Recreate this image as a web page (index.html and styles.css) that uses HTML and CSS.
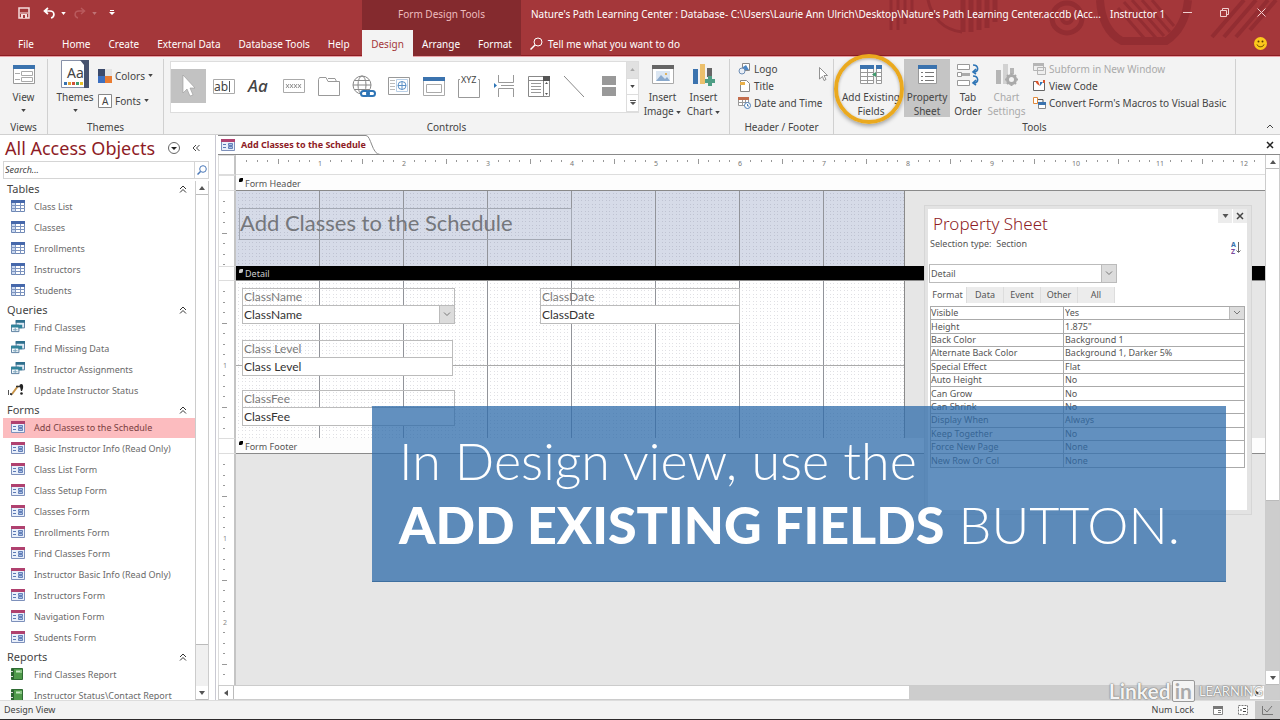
FILE: index.html
```html
<!DOCTYPE html>
<html lang="en">
<head>
    <meta charset="UTF-8">
    <meta name="viewport" content="width=device-width, initial-scale=1.0">
    <title>Nature's Path Learning Center : Database</title>
    <link rel="stylesheet" href="styles.css">
</head>
<body>
    <!-- shared icons -->
    <svg class="sprite" aria-hidden="true">
        <symbol id="i-table" viewBox="0 0 14 12">
            <path fill="#fff" stroke="#6f88b5" d="M.5.5h13v11H.5z"/>
            <path fill="#4668ab" d="M0 0h14v3H0z"/>
            <path fill="#c9d8f0" d="M1 3h3v8H1z"/>
            <path stroke="#7d94bf" d="M0 5.5h14M0 8.5h14M4.5 3v9M9.5 3v9"/>
        </symbol>
        <symbol id="i-query" viewBox="0 0 15 14">
            <path fill="#dfeaf5" stroke="#54799c" d="M5.500.5h9v8h-9z"/>
            <path fill="#2f6f8d" d="M5 0h10v3H5z"/>
            <path fill="#f4f9fc" stroke="#54799c" d="M.5 5.500h8v7h-8z"/>
            <path fill="#31849b" d="M0 5h9v3H0zM8 5h4v4H8z"/>
            <path stroke="#7aa3bb" d="M4.500 8v4M2 10.500h5"/>
        </symbol>
        <symbol id="i-update" viewBox="0 0 17 13">
            <path fill="none" stroke="#555" d="M1.500 7v5M3.500 10v2"/>
            <path stroke="#c79347" stroke-width="2" d="M5 11l6-8"/>
            <path stroke="#333" stroke-width="1.500" d="M4 12l1-1.500M9 3.500h4"/>
            <path fill="#222" d="M12.500 2c3-3 5 1 2.500 6h-1z"/>
            <circle cx="14.500" cy="10.500" r="1.300" fill="#222"/>
        </symbol>
        <symbol id="i-form" viewBox="0 0 14 12">
            <path fill="#e9effa" stroke="#7d90bb" d="M.5.5h13v11H.5z"/>
            <path fill="#b0416f" d="M0 0h14v3H0z"/>
            <path stroke="#5b79b5" d="M2 5.500h3M2 8.500h3"/>
            <path fill="#a9bfe6" stroke="#6480b8" d="M7.500 4.500h4v2h-4zM7.500 7.500h4v2h-4z"/>
        </symbol>
        <symbol id="i-report" viewBox="0 0 12 12">
            <path fill="#4f9a4a" stroke="#2f6b33" d="M.5.5h11v11H.5z"/>
            <path fill="#2c6130" d="M1 1h2v10H1z"/>
            <path fill="#8ac584" d="M5 2h6v3H5z"/>
            <path stroke="#c7e6c2" d="M5 3.500h4"/>
            <path stroke="#ddd" d="M0 3.500h2M0 8.500h2"/>
        </symbol>
        <symbol id="i-up2" viewBox="0 0 8 8">
            <path fill="none" stroke="#333" d="M1 4l3-3 3 3M1 7.500l3-3 3 3"/>
        </symbol>
        <symbol id="i-down" viewBox="0 0 6 4"><path fill="currentColor" d="M0 0h6L3 4z"/></symbol>
        <symbol id="i-chev" viewBox="0 0 8 6"><path fill="none" stroke="currentColor" d="M1 1l3 3 3-3"/></symbol>
    </svg>

    <header class="titlebar">
        <div class="bar-left">
            <div class="quick-access">
                <button aria-label="Save"><svg width="12" height="12" viewBox="0 0 12 12"><path fill="none" stroke="#f5dcdc" stroke-width="1.500" d="M1 1h10v10H1z"/><path fill="#f5dcdc" d="M3 7h6v4H3z"/><path fill="#a4373a" d="M5 8h2v3H5z"/><path stroke="#f5dcdc" d="M2 6h8"/></svg></button>
                <button aria-label="Undo"><svg width="12" height="12" viewBox="0 0 12 12"><path fill="none" stroke="#fff" stroke-width="1.700" d="M5 1L1.500 4 5 7M2 4h5c5 0 5 6 1 7"/></svg></button>
                <svg width="5" height="3"><use href="#i-down"/></svg>
                <button aria-label="Redo" disabled><svg width="12" height="12" viewBox="0 0 12 12"><path fill="none" stroke="#b95a5d" stroke-width="1.500" d="M7 1l3.500 3L7 7M10 4H5c-5 0-5 6-1 7"/></svg></button>
                <svg class="dim" width="5" height="3"><use href="#i-down"/></svg>
                <button aria-label="Customize Quick Access Toolbar"><svg width="6" height="6" viewBox="0 0 6 6"><path fill="#fff" d="M1 0h4v1H1zM0 2h6L3 5z"/></svg></button>
            </div>
            <nav class="tabs">
                <a href="#" class="file">File</a>
                <a href="#">Home</a>
                <a href="#">Create</a>
                <a href="#">External Data</a>
                <a href="#">Database Tools</a>
                <a href="#">Help</a>
            </nav>
        </div>
        <div class="bar-context">
            <div class="context-name">Form Design Tools</div>
            <nav class="tabs">
                <a href="#" class="active">Design</a>
                <a href="#">Arrange</a>
                <a href="#">Format</a>
            </nav>
        </div>
        <div class="bar-right">
            <svg class="art" width="460" height="55" viewBox="0 0 460 55" fill="none" stroke="#932d32">
                <path stroke-width="3" d="M71 0v30M78 0v30M85 0v24M92 0v16"/>
                <path stroke-width="3" d="M108 0c4 18 16 30 34 32"/>
                <path stroke-width="5" d="M143 0v32M151 0v32M159 0v30M167 0v28M175 0v22"/>
                <circle cx="247" cy="18" r="15" stroke-width="5"/>
                <circle cx="247" cy="18" r="5" stroke-width="4"/>
                <path stroke-width="8" d="M280 0c1 18 8 34 22 41h44c12-8 20-20 22-41"/>
                <path stroke-width="3" d="M298 8l26 30M304 2l32 36M312 0l32 36M322 0l28 32M332 0l22 26"/>
                <path stroke-width="4" d="M392 37l32-37M404 37l32-37M416 37l32-37M430 30l26-30"/>
            </svg>
            <div class="window-row">
                <span class="doc-title">Nature's Path Learning Center : Database- C:\Users\Laurie Ann Ulrich\Desktop\Nature's Path Learning Center.accdb (Acc...</span>
                <span class="user">Instructor 1</span>
                <div class="window-buttons">
                    <button aria-label="Minimize"><svg width="9" height="9" viewBox="0 0 9 9"><path stroke="#f0d0d0" d="M0 4.500h9"/></svg></button>
                    <button aria-label="Restore"><svg width="9" height="9" viewBox="0 0 9 9"><path fill="none" stroke="#f0d0d0" d="M.5 2.500h6v6h-6zM2.500 2V.5h6v6H7"/></svg></button>
                    <button aria-label="Close"><svg width="9" height="9" viewBox="0 0 9 9"><path stroke="#f0d0d0" d="M.5.5l8 8M8.500.5l-8 8"/></svg></button>
                </div>
            </div>
            <div class="tell-row">
                <svg width="13" height="13" viewBox="0 0 13 13"><circle cx="8" cy="5" r="4" fill="none" stroke="#fff"/><path stroke="#fff" stroke-width="1.500" d="M5 8L.5 12.500"/></svg>
                <span>Tell me what you want to do</span>
                <svg class="smile" width="13" height="13" viewBox="0 0 13 13"><circle cx="6.500" cy="6.500" r="6.500" fill="#fbc81c"/><circle cx="4.500" cy="4.500" r="1" fill="#5c3a00"/><circle cx="8.500" cy="4.500" r="1" fill="#5c3a00"/><path fill="none" stroke="#5c3a00" d="M3 7.500c1 3 6 3 7 0"/></svg>
            </div>
        </div>
    </header>

    <section class="ribbon">
        <div class="group views">
            <div class="group-body">
                <button class="big">
                    <svg width="22" height="20" viewBox="0 0 22 20"><path fill="#fff" stroke="#999" d="M.5.5h21v18H.5z"/><path fill="#3b73ae" d="M0 0h22v4H0z"/><path fill="none" stroke="#aaa" d="M2 8.500h5M2 14.500h5M8.500 6.500h11v4h-11zM8.500 12.500h11v4h-11z"/></svg>
                    <span>View</span>
                    <svg width="5" height="3"><use href="#i-down"/></svg>
                </button>
            </div>
            <div class="group-name">Views</div>
        </div>

        <div class="group themes">
            <div class="group-body">
                <button class="big">
                    <svg width="28" height="28" viewBox="0 0 28 28"><path fill="#fff" stroke="#8790a8" d="M.5.5h27v27H.5z"/><path fill="#46526e" d="M19 0l9 0v28h-5V5z"/><text x="6" y="18" class="aa" font-size="14">Aa</text><path fill="#3b73ae" d="M3 22h3v3H3z"/><path fill="#e0a030" d="M7 22h3v3H7z"/><path fill="#d0533a" d="M11 22h3v3h-3z"/><path fill="#3f9c6d" d="M15 22h3v3h-3z"/><path fill="#e8c02a" d="M19 22h3v3h-3z"/></svg>
                    <span>Themes</span>
                    <svg width="5" height="3"><use href="#i-down"/></svg>
                </button>
                <div class="stack wide">
                    <button class="small"><svg width="14" height="14" viewBox="0 0 14 14"><path fill="#3b4a6b" d="M0 0h7v7H0z"/><path fill="#e3e3e3" d="M7 0h7v7H7z"/><path fill="#3b6fc0" d="M0 7h7v7H0z"/><path fill="#ea7c31" d="M7 7h7v7H7z"/></svg>Colors <svg width="5" height="3"><use href="#i-down"/></svg></button>
                    <button class="small"><svg width="14" height="14" viewBox="0 0 14 14"><path fill="#fff" stroke="#888" d="M.5.5h13v13H.5z"/><text x="4" y="11" class="aa" font-size="10">A</text></svg>Fonts <svg width="5" height="3"><use href="#i-down"/></svg></button>
                </div>
            </div>
            <div class="group-name">Themes</div>
        </div>

        <div class="group controls">
            <div class="group-body">
                <div class="gallery">
                    <button class="tool on" aria-label="Select"><svg width="14" height="22" viewBox="0 0 14 22"><path fill="#fff" stroke="#999" stroke-width=".6" d="M1 0l12 13H8l3 7-3 1-3-7-4 4z"/></svg></button>
                    <button class="tool" aria-label="Text Box"><svg width="22" height="15" viewBox="0 0 22 15"><path fill="#fff" stroke="#aaa" d="M.5.5h21v14H.5z"/><text x="1" y="12" class="ic" font-size="12">ab</text><path stroke="#555" d="M16.500 2v11"/></svg></button>
                    <button class="tool" aria-label="Label"><svg width="26" height="22" viewBox="0 0 26 22"><text x="2" y="17" class="ic bold-it" font-size="17">Aa</text></svg></button>
                    <button class="tool" aria-label="Button"><svg width="22" height="14" viewBox="0 0 22 14"><path fill="#fff" stroke="#aaa" d="M.5.5h21v13H.5z"/><path fill="none" stroke="#777" stroke-width=".8" d="M3 5l3 4M6 5L3 9M7 5l3 4M10 5L7 9M11 5l3 4M14 5l-3 4M15 5l3 4M18 5l-3 4"/></svg></button>
                    <button class="tool" aria-label="Tab Control"><svg width="22" height="19" viewBox="0 0 22 19"><path fill="#fff" stroke="#999" d="M.5 18.500V2.500l1-2H8l2 4h11.500v14zM10 1.500h7l1.500 3"/></svg></button>
                    <button class="tool" aria-label="Link"><svg width="24" height="23" viewBox="0 0 24 23" fill="none" stroke="#888"><circle cx="10" cy="10" r="9"/><ellipse cx="10" cy="10" rx="4" ry="9"/><path d="M1 10h18M2.500 5.500h15M2.500 14.500h15"/><rect x="9" y="16" width="8" height="5" rx="2.500" stroke="#2e75b6" stroke-width="2" fill="#fff"/><rect x="15" y="16" width="8" height="5" rx="2.500" stroke="#2e75b6" stroke-width="2"/></svg></button>
                    <button class="tool" aria-label="Web Browser Control"><svg width="22" height="18" viewBox="0 0 22 18" fill="none" stroke="#999"><path fill="#fff" d="M.5.5h21v17H.5z"/><path stroke="#bbb" d="M2 3.500h5M2 6.500h5M2 9.500h5M2 12.500h5"/><g stroke="#5b90c6"><path d="M8.500 2.500h11v12h-11z" stroke="#b9cfe6"/><circle cx="14" cy="8.500" r="4"/><path d="M14 4.500v8M10 8.500h8"/></g></svg></button>
                    <button class="tool" aria-label="Navigation Control"><svg width="22" height="19" viewBox="0 0 22 19"><path fill="#fff" stroke="#aaa" d="M.5.5h21v18H.5zM3.500 7.500h15v8h-15z"/><path fill="#3b73ae" d="M0 0h22v4H0z"/></svg></button>
                    <button class="tool" aria-label="Option Group"><svg width="22" height="24" viewBox="0 0 22 24"><path fill="#fff" stroke="#999" d="M.5 5.500h21v18H.5z"/><path fill="#fff" d="M2 1h18v8H2z"/><text x="3" y="9" class="ic" font-size="9">XYZ</text></svg></button>
                    <button class="tool" aria-label="Page Break"><svg width="20" height="22" viewBox="0 0 20 22"><path fill="none" stroke="#999" d="M4.500 0v7.500h15V0M4.500 22v-8.500h15V22M7 10.500h13"/><path fill="#2e75b6" d="M0 8l3 2.500L0 13z"/></svg></button>
                    <button class="tool" aria-label="Combo Box"><svg width="22" height="21" viewBox="0 0 22 21"><path fill="#fff" stroke="#888" d="M.5.5h21v20H.5zM0 4.500h22M15.500 4v17"/><path fill="#555" d="M15 0h7v5h-7zM17 8h3l-1.500-2zM17 17h3l-1.500 2z"/><path stroke="#999" d="M3 7.500h10M3 10.500h10M3 13.500h10M3 16.500h10"/></svg></button>
                    <button class="tool" aria-label="Line"><svg width="20" height="21" viewBox="0 0 20 21"><path stroke="#888" d="M0 0l20 21"/></svg></button>
                    <button class="tool" aria-label="Toggle Button"><svg width="14" height="20" viewBox="0 0 14 20"><path fill="#999" d="M0 0h14v9H0zM0 11h14v9H0z"/></svg></button>
                    <div class="gallery-scroll">
                        <button aria-label="Scroll up" disabled><svg class="flip" width="5" height="3"><use href="#i-down"/></svg></button>
                        <button aria-label="Scroll down"><svg width="5" height="3"><use href="#i-down"/></svg></button>
                        <button aria-label="More"><svg width="6" height="6" viewBox="0 0 6 6"><path fill="#555" d="M0 0h6v1H0zM0 2h6L3 5z"/></svg></button>
                    </div>
                </div>
                <button class="big">
                    <svg width="22" height="20" viewBox="0 0 22 20"><path fill="#fff" stroke="#aaa" d="M.5.5h21v18H.5z"/><path fill="#666" d="M0 0h22v4H0z"/><path fill="#dbe6f2" d="M4 6h14v10H4z"/><path fill="#8aa9cc" d="M4 16l5-6 4 4 2-2 3 4z"/><circle cx="14" cy="9" r="1" fill="#e0a030"/></svg>
                    <span>Insert<br>Image <svg width="5" height="3"><use href="#i-down"/></svg></span>
                </button>
                <button class="big">
                    <svg width="22" height="22" viewBox="0 0 22 22"><path fill="#3b73ae" d="M0 5h5v15H0z"/><path fill="#ecc06c" d="M7 0h5v20H7z"/><path fill="#666" d="M14 4h5v9h-5z"/><path fill="#4f9e85" d="M15 12h4v3h3v4h-3v3h-4v-3h-3v-4h3z"/></svg>
                    <span>Insert<br>Chart <svg width="5" height="3"><use href="#i-down"/></svg></span>
                </button>
            </div>
            <div class="group-name">Controls</div>
        </div>

        <div class="group header-footer">
            <div class="group-body">
                <div class="stack">
                    <button class="small"><svg width="13" height="12" viewBox="0 0 13 12"><path fill="#fff" stroke="#888" d="M4.500.5h7v7h-7z"/><path fill="#4a86c5" d="M5 4l3-2 3 5H5z"/><circle cx="4" cy="8" r="3" fill="#e9eef5" stroke="#6d8db5"/></svg>Logo</button>
                    <button class="small"><svg width="13" height="12" viewBox="0 0 13 12"><path fill="#fff" stroke="#888" d="M2.500.5h6l3 3v8h-9z"/><path fill="#e9b04a" d="M2 2h5v3H2z"/></svg>Title</button>
                    <button class="small"><svg width="13" height="12" viewBox="0 0 13 12"><path fill="#fff" stroke="#999" d="M.5.5h10v8H.5zM0 5.500h10M4.500 2v7M7.500 2v7"/><path fill="#c36d4d" d="M0 0h11v3H0z"/><circle cx="9.500" cy="8.500" r="3" fill="#fff" stroke="#4a7fb8"/><path fill="none" stroke="#4a7fb8" d="M9.500 7v2H11"/></svg>Date and Time</button>
                </div>
            </div>
            <div class="group-name">Header / Footer</div>
        </div>

        <div class="group tools">
            <div class="group-body">
                <button class="big add-fields">
                    <svg width="22" height="20" viewBox="0 0 22 20"><path fill="#fff" stroke="#999" d="M.5.5h13v18H.5zM16.500.5h5v18h-5zM0 7.500h14M0 11.500h14M0 15.500h14M7.500 3v16M16 7.500h6M16 11.500h6M16 15.500h6"/><path fill="#3b73ae" d="M0 0h14v4H0zM16 0h6v4h-6z"/><path fill="#3f9c6d" d="M16 7v5l-4-2.500z"/></svg>
                    <span>Add Existing<br>Fields</span>
                </button>
                <button class="big on">
                    <svg width="19" height="20" viewBox="0 0 19 20"><path fill="#fff" stroke="#999" d="M.5.5h18v18H.5z"/><path fill="#3b73ae" d="M0 0h19v4H0z"/><path stroke="#777" d="M3 7.500h2M7 7.500h9M3 11.500h2M7 11.500h9M3 15.500h2M7 15.500h9"/></svg>
                    <span>Property<br>Sheet</span>
                </button>
                <button class="big tab-order">
                    <svg width="22" height="22" viewBox="0 0 22 22"><path fill="#fff" stroke="#999" d="M.5.5h12v5H.5zM.5 8.500h4v4h-4zM.5 16.500h12v5H.5z"/><path fill="#aaa" d="M5 9h8v3H5z"/><path fill="none" stroke="#2e75b6" stroke-width="1.600" d="M16 1c6 0 6 7 1 7M19 5l-3 3 3 2M16 12c6 0 6 7 1 7M19 16l-3 3 3 2"/></svg>
                    <span>Tab<br>Order</span>
                </button>
                <button class="big" disabled>
                    <svg width="22" height="22" viewBox="0 0 22 22"><path fill="#b5b5b5" d="M0 6h5v14H0z"/><path fill="#d2d2d2" d="M7 0h5v20H7z"/><path fill="#b5b5b5" d="M14 4h4v6h-4z"/><circle cx="15.500" cy="15.500" r="4" fill="#f3f3f3" stroke="#aaa" stroke-width="3"/><path stroke="#aaa" stroke-width="2" d="M15.500 9v2M15.500 20v2M9 15.500h2M20 15.500h2M11 11l1.500 1.500M18.500 18.500L20 20M20 11l-1.500 1.500M11 20l1.500-1.500"/></svg>
                    <span>Chart<br>Settings</span>
                </button>
                <div class="stack">
                    <button class="small" disabled><svg width="13" height="12" viewBox="0 0 13 12"><path fill="#eee" stroke="#b5b5b5" d="M.5.5h10v7H.5zM4.500 4.500h8v7h-8z"/><path fill="#b5b5b5" d="M0 0h11v3H0z"/></svg>Subform in New Window</button>
                    <button class="small"><svg width="13" height="12" viewBox="0 0 13 12"><path fill="#fff" stroke="#666" d="M3 1.500H.5v9h11v-9H10"/><path fill="#d9542b" d="M2 1h3l2 5-3-2z"/><path fill="#d9542b" d="M10 0h2v3h-2z"/><path fill="#2e75b6" d="M7 2h3L7 6z"/></svg>View Code</button>
                    <button class="small"><svg width="13" height="12" viewBox="0 0 13 12"><path fill="#fff" stroke="#e08a3c" d="M.5.5h4v6h-4z"/><path fill="none" stroke="#555" d="M5 2.500h5V5"/><path fill="#fff" stroke="#888" d="M5.500 5.500h7v6h-7z"/><path fill="#3b73ae" d="M5 5h8v3H5z"/></svg>Convert Form's Macros to Visual Basic</button>
                </div>
            </div>
            <div class="group-name">Tools</div>
        </div>
        <button class="collapse" aria-label="Collapse the Ribbon"><svg class="flip" width="8" height="6"><use href="#i-chev"/></svg></button>
    </section>

    <main class="workspace">
        <aside class="nav-pane">
            <div class="nav-head">
                <h1>All Access Objects</h1>
                <button aria-label="Select category"><svg width="12" height="12" viewBox="0 0 12 12"><circle cx="6" cy="6" r="5.500" fill="none" stroke="#666"/><path fill="#222" d="M3 5h6L6 8z"/></svg></button>
                <button aria-label="Shutter bar"><svg width="8" height="8" viewBox="0 0 8 8"><path fill="none" stroke="#444" d="M4 1L1 4l3 3M7.500 1l-3 3 3 3"/></svg></button>
            </div>
            <div class="search">
                <input type="text" aria-label="Search" placeholder="Search...">
                <button aria-label="Go"><svg width="10" height="10" viewBox="0 0 10 10"><circle cx="6" cy="4" r="3.300" fill="none" stroke="#4a78b8"/><path stroke="#4a78b8" stroke-width="1.500" d="M3.500 6.500L.5 9.500"/></svg></button>
            </div>
            <div class="nav-body">
                <div class="nav-list">
                    <h2>Tables <svg width="8" height="8"><use href="#i-up2"/></svg></h2>
                    <ul>
                        <li><svg width="14" height="12"><use href="#i-table"/></svg>Class List</li>
                        <li><svg width="14" height="12"><use href="#i-table"/></svg>Classes</li>
                        <li><svg width="14" height="12"><use href="#i-table"/></svg>Enrollments</li>
                        <li><svg width="14" height="12"><use href="#i-table"/></svg>Instructors</li>
                        <li><svg width="14" height="12"><use href="#i-table"/></svg>Students</li>
                    </ul>
                    <h2>Queries <svg width="8" height="8"><use href="#i-up2"/></svg></h2>
                    <ul>
                        <li><svg width="14" height="13"><use href="#i-query"/></svg>Find Classes</li>
                        <li><svg width="14" height="13"><use href="#i-query"/></svg>Find Missing Data</li>
                        <li><svg width="14" height="13"><use href="#i-query"/></svg>Instructor Assignments</li>
                        <li class="action"><svg width="17" height="13"><use href="#i-update"/></svg>Update Instructor Status</li>
                    </ul>
                    <h2>Forms <svg width="8" height="8"><use href="#i-up2"/></svg></h2>
                    <ul>
                        <li class="selected"><svg width="14" height="12"><use href="#i-form"/></svg>Add Classes to the Schedule</li>
                        <li><svg width="14" height="12"><use href="#i-form"/></svg>Basic Instructor Info (Read Only)</li>
                        <li><svg width="14" height="12"><use href="#i-form"/></svg>Class List Form</li>
                        <li><svg width="14" height="12"><use href="#i-form"/></svg>Class Setup Form</li>
                        <li><svg width="14" height="12"><use href="#i-form"/></svg>Classes Form</li>
                        <li><svg width="14" height="12"><use href="#i-form"/></svg>Enrollments Form</li>
                        <li><svg width="14" height="12"><use href="#i-form"/></svg>Find Classes Form</li>
                        <li><svg width="14" height="12"><use href="#i-form"/></svg>Instructor Basic Info (Read Only)</li>
                        <li><svg width="14" height="12"><use href="#i-form"/></svg>Instructors Form</li>
                        <li><svg width="14" height="12"><use href="#i-form"/></svg>Navigation Form</li>
                        <li><svg width="14" height="12"><use href="#i-form"/></svg>Students Form</li>
                    </ul>
                    <h2>Reports <svg width="8" height="8"><use href="#i-up2"/></svg></h2>
                    <ul>
                        <li><svg width="12" height="12"><use href="#i-report"/></svg>Find Classes Report</li>
                        <li><svg width="12" height="12"><use href="#i-report"/></svg>Instructor Status\Contact Report</li>
                    </ul>
                </div>
                <div class="vscroll nav-scroll">
                    <button aria-label="Scroll up"><svg class="flip" width="6" height="4"><use href="#i-down"/></svg></button>
                    <div class="thumb"></div>
                    <div class="track"></div>
                    <button aria-label="Scroll down"><svg width="6" height="4"><use href="#i-down"/></svg></button>
                </div>
            </div>
        </aside>

        <section class="document">
            <div class="doc-tabs">
                <div class="doc-tab"><svg width="14" height="12"><use href="#i-form"/></svg>Add Classes to the Schedule</div>
                <svg class="tab-slope" width="14" height="20" viewBox="0 0 14 20"><path fill="none" stroke="#8a8a8a" d="M0 .5c5 0 6 19 14 19"/></svg>
                <button aria-label="Close"><svg width="8" height="8" viewBox="0 0 8 8"><path stroke="#222" stroke-width="1.500" d="M1 1l6 6M7 1L1 7"/></svg></button>
            </div>
            <div class="design-area">
                <div class="surface">
                    <div class="row ruler-row">
                        <div class="gutter box"></div>
                        <div class="ruler">
                            <span>1</span><span>2</span><span>3</span><span>4</span><span>5</span><span>6</span><span>7</span><span>8</span><span>9</span><span>10</span><span>11</span><span>12</span>
                        </div>
                    </div>
                    <div class="row">
                        <div class="gutter box"></div>
                        <div class="band"><i></i>Form Header</div>
                    </div>
                    <div class="row">
                        <div class="gutter ticks"></div>
                        <div class="canvas head">
                            <div class="sheet"><div class="form-title">Add Classes to the Schedule</div></div>
                        </div>
                    </div>
                    <div class="row">
                        <div class="gutter box"></div>
                        <div class="band current"><i></i>Detail</div>
                    </div>
                    <div class="row">
                        <div class="gutter ticks"><span>1</span></div>
                        <div class="canvas detail">
                            <div class="sheet">
                                <div class="field name">
                                    <label for="class-name">ClassName</label>
                                    <div class="combo"><select id="class-name"><option>ClassName</option></select><svg width="8" height="6"><use href="#i-chev"/></svg></div>
                                </div>
                                <div class="field date">
                                    <label for="class-date">ClassDate</label>
                                    <input type="text" id="class-date" value="ClassDate">
                                </div>
                                <div class="field level">
                                    <label for="class-level">Class Level</label>
                                    <input type="text" id="class-level" value="Class Level">
                                </div>
                                <div class="field fee">
                                    <label for="class-fee">ClassFee</label>
                                    <input type="text" id="class-fee" value="ClassFee">
                                </div>
                            </div>
                        </div>
                    </div>
                    <div class="row">
                        <div class="gutter box"></div>
                        <div class="band"><i></i>Form Footer</div>
                    </div>
                    <div class="row fill">
                        <div class="gutter ticks"><span>1</span><span>2</span></div>
                        <div class="canvas"></div>
                    </div>
                </div>
                <div class="vscroll doc-scroll">
                    <button aria-label="Scroll up"><svg class="flip" width="6" height="4"><use href="#i-down"/></svg></button>
                    <div class="thumb"></div>
                    <div class="track"></div>
                    <button aria-label="Scroll down"><svg width="6" height="4"><use href="#i-down"/></svg></button>
                </div>
            </div>
            <div class="hscroll">
                <button aria-label="Scroll left"><svg width="4" height="6" viewBox="0 0 4 6"><path fill="#555" d="M4 0v6L0 3z"/></svg></button>
                <div class="thumb"></div>
                <div class="track"></div>
                <button aria-label="Scroll right"><svg width="4" height="6" viewBox="0 0 4 6"><path fill="#333" d="M0 0v6l4-3z"/></svg></button>
            </div>
        </section>
    </main>

    <footer class="status">
        <span>Design View</span>
        <span class="lock">Num Lock</span>
        <button aria-label="Form View"><svg width="10" height="9" viewBox="0 0 10 9"><path fill="#fff" stroke="#888" d="M.5.5h9v8h-9z"/><path fill="#777" d="M0 0h10v3H0zM5 4h3v1H5zM5 6h3v1H5z"/></svg></button>
        <button aria-label="Layout View"><svg width="10" height="10" viewBox="0 0 10 10"><path fill="#fff" stroke="#777" stroke-dasharray="2 1" d="M.5.5h9v9h-9z"/><path stroke="#444" d="M5 3.500h3M5 6.500h3M2 5h2"/></svg></button>
        <button class="on" aria-label="Design View"><svg width="11" height="10" viewBox="0 0 11 10"><path fill="none" stroke="#777" d="M.5 1v8.500H11"/><path fill="none" stroke="#777" d="M2 4l3 3 5-6"/></svg></button>
    </footer>

    <!-- floating property sheet -->
    <section class="property-sheet">
        <div class="sheet-inner">
            <div class="sheet-buttons">
                <button aria-label="Menu"><svg width="7" height="4"><use href="#i-down"/></svg></button>
                <button aria-label="Close"><svg width="8" height="8" viewBox="0 0 8 8"><path stroke="#444" stroke-width="1.500" d="M1 1l6 6M7 1L1 7"/></svg></button>
            </div>
            <h2>Property Sheet</h2>
            <div class="selection">
                <span>Selection type: &nbsp;Section</span>
                <button aria-label="Sort"><svg width="10" height="14" viewBox="0 0 10 14"><text x="0" y="6" font-size="7" class="sort-a">A</text><text x="0" y="13" font-size="7" class="sort-z">Z</text><path fill="none" stroke="#666" d="M7.500 1v10M5.500 9.500l2 2 2-2"/></svg></button>
            </div>
            <div class="combo section-pick"><select aria-label="Section"><option>Detail</option></select><svg width="8" height="6"><use href="#i-chev"/></svg></div>
            <div class="sheet-tabs">
                <button class="on">Format</button>
                <button>Data</button>
                <button>Event</button>
                <button>Other</button>
                <button>All</button>
            </div>
            <table>
                <tr><th>Visible</th><td><div class="combo"><select aria-label="Visible"><option>Yes</option></select><svg width="8" height="6"><use href="#i-chev"/></svg></div></td></tr>
                <tr><th>Height</th><td>1.875"</td></tr>
                <tr><th>Back Color</th><td>Background 1</td></tr>
                <tr><th>Alternate Back Color</th><td>Background 1, Darker 5%</td></tr>
                <tr><th>Special Effect</th><td>Flat</td></tr>
                <tr><th>Auto Height</th><td>No</td></tr>
                <tr><th>Can Grow</th><td>No</td></tr>
                <tr><th>Can Shrink</th><td>No</td></tr>
                <tr><th>Display When</th><td>Always</td></tr>
                <tr><th>Keep Together</th><td>No</td></tr>
                <tr><th>Force New Page</th><td>None</td></tr>
                <tr><th>New Row Or Col</th><td>None</td></tr>
            </table>
        </div>
    </section>

    <svg class="pointer" width="9" height="14" viewBox="0 0 9 14"><path fill="#fff" stroke="#777" stroke-width=".8" d="M.5.5l8 8H5l2 4-2 1-1.500-4-3 2.500z"/></svg>
    <div class="ring"></div>

    <div class="caption">
        <p>In Design view, use the</p>
        <p><strong>ADD EXISTING FIELDS</strong> BUTTON.</p>
    </div>

    <div class="watermark"><b>Linked</b><b class="in">in</b><span>LEARNING</span></div>
</body>
</html>
```
FILE: styles.css
```css
:root {
    --red: #a4373a;
    --red-dark: #842a2e;
    --title-red: #8e1c26;
    --ribbon: #f3f3f3;
    --line: #d0d0d0;
    --gray: #e6e6e6;
    --text: #444;
}

* {
    box-sizing: border-box;
}

body {
    margin: 0;
    height: 100vh;
    display: flex;
    flex-direction: column;
    overflow: hidden;
    position: relative;
    font-family: "Noto Sans", "Open Sans", sans-serif;
    font-size: 10px;
    line-height: 14px;
    color: var(--text);
    background: #fff;
    border-bottom: 1px solid #2d2a2b;
}

button, input, select {
    font: inherit;
    color: inherit;
    border: 0;
    padding: 0;
    margin: 0;
    background: none;
}

button {
    display: flex;
    align-items: center;
    justify-content: center;
    white-space: nowrap;
}

h1, h2, p, ul {
    margin: 0;
    padding: 0;
    font-weight: 400;
}

svg {
    flex: none;
}

.sprite {
    position: absolute;
    width: 0;
    height: 0;
}

.flip {
    transform: rotate(180deg);
}

/* title bar and tabs */
.titlebar {
    display: flex;
    height: 57px;
    flex: none;
    background: var(--red);
    color: #fff;
    border-bottom: 1px solid #e9a0a6;
    box-shadow: inset 0 -1px #8d1c22;
}

.bar-left {
    width: 362px;
}

.bar-context {
    width: 159px;
    background: var(--red-dark);
}

.bar-right {
    flex: 1;
    min-width: 0;
    position: relative;
}

.art {
    position: absolute;
    right: 0;
    top: 0;
    width: 460px;
}

.quick-access {
    display: flex;
    align-items: center;
    gap: 8px;
    height: 30px;
    padding: 0 0 4px 18px;
}

.quick-access button:nth-child(2) {
    margin-left: 5px;
}

.quick-access button:last-child {
    margin-left: 4px;
}

.quick-access > svg {
    margin-left: -2px;
}

.dim {
    opacity: .3;
}

.context-name {
    height: 30px;
    line-height: 28px;
    text-align: center;
    color: #eebcbe;
}

.tabs {
    display: flex;
}

.tabs a {
    height: 27px;
    line-height: 28px;
    padding: 0 9px;
    color: #fff;
    text-decoration: none;
    white-space: nowrap;
}

.tabs .file {
    padding: 0 19px 0 18px;
}

.tabs .active {
    width: 51px;
    text-align: center;
    color: var(--red);
    background: var(--ribbon);
}

.window-row {
    display: flex;
    height: 30px;
    line-height: 28px;
    position: relative;
    padding-left: 10px;
}

.doc-title {
    width: 579px;
    white-space: nowrap;
    overflow: hidden;
}

.window-buttons {
    display: flex;
    margin-left: auto;
    padding-bottom: 5px;
}

.window-buttons button {
    width: 37px;
}

.tell-row {
    display: flex;
    align-items: center;
    gap: 5px;
    height: 27px;
    padding: 0 13px 0 9px;
    position: relative;
}

.smile {
    margin-left: auto;
}

/* ribbon */
.ribbon {
    display: flex;
    flex: none;
    height: 78px;
    background: var(--ribbon);
    border-bottom: 1px solid var(--line);
}

.group {
    display: flex;
    flex-direction: column;
    margin-top: 2px;
    border-right: 1px solid var(--line);
}

.group-body {
    display: flex;
    flex: 1;
    align-items: flex-start;
}

.group-name {
    height: 14px;
    text-align: center;
}

.views {
    width: 48px;
}

.themes {
    width: 116px;
}

.controls {
    width: 566px;
}

.header-footer {
    width: 104px;
}

.tools {
    width: 402px;
}

.big {
    flex-direction: column;
    justify-content: flex-start;
    gap: 4px;
    min-width: 41px;
    height: 58px;
    padding-top: 5px;
}

.big > svg:first-child {
    height: 22px;
}

.big > svg:last-child {
    margin-top: 1px;
}

.big span svg {
    vertical-align: middle;
}

.views .big {
    width: 47px;
}

.themes .big {
    width: 46px;
    margin-left: 4px;
    padding-top: 1px;
    gap: 2px;
}

.themes .big > svg:first-child {
    height: 28px;
}

.themes .big > svg:last-child {
    margin-top: 3px;
}

.big.on {
    background: #c5c5c5;
    width: 46px;
}

button:disabled {
    color: #aaa;
}

.add-fields {
    width: 58px;
    margin: 0 4px 0 8px;
}

.big.tab-order {
    min-width: 36px;
}

.stack {
    display: flex;
    flex-direction: column;
    align-items: flex-start;
    padding: 1px 0 0 6px;
}

.stack.wide {
    padding: 8px 0 0 0;
    gap: 8px;
}

.header-footer .stack {
    padding-left: 8px;
}

.small {
    height: 17px;
    gap: 3px;
}

.aa, .ic {
    font-family: "Noto Sans", sans-serif;
    fill: #444;
}

.bold-it {
    font-style: italic;
    font-weight: 500;
}

.gallery {
    display: flex;
    margin: 2px 3px 0 6px;
    height: 52px;
    background: #fff;
    border: 1px solid #ddd;
}

.tool {
    width: 35px;
    height: 34px;
    margin-top: 7px;
}

.tool.on {
    background: #c2c2c2;
}

.gallery-scroll {
    width: 12px;
    display: flex;
    flex-direction: column;
    border-left: 1px solid #ddd;
}

.gallery-scroll button {
    flex: 1;
    border-bottom: 1px solid #ddd;
}

.gallery-scroll button:disabled {
    background: #e1e1e1;
}

.collapse {
    margin: auto 6px 5px auto;
}

/* navigation pane */
.workspace {
    display: flex;
    flex: 1;
    min-height: 0;
}

.nav-pane {
    width: 216px;
    display: flex;
    flex-direction: column;
    padding: 0 6px 0 3px;
    border-right: 1px solid #c9c9d2;
}

.nav-head {
    display: flex;
    align-items: center;
    height: 26px;
    padding: 0 9px 0 2px;
}

.nav-head h1 {
    flex: 1;
    font-size: 18px;
    line-height: 26px;
    color: var(--title-red);
    white-space: nowrap;
}

.nav-head button:last-child {
    margin-left: 12px;
}

.search {
    display: flex;
    height: 18px;
    flex: none;
    border: 1px solid #d5d5d5;
}

.search input {
    flex: 1;
    min-width: 0;
    font-size: 9px;
    padding: 0 1px;
}

.search input::placeholder {
    font-style: italic;
    color: #444;
    opacity: 1;
}

.search button {
    width: 14px;
    border-left: 1px solid #d5d5d5;
}

.nav-body {
    display: flex;
    flex: 1;
    min-height: 0;
    padding-top: 2px;
}

.nav-list {
    flex: 1;
    min-width: 0;
    overflow: hidden;
}

.nav-list h2 {
    display: flex;
    align-items: center;
    justify-content: space-between;
    height: 16px;
    font-size: 11px;
    line-height: 16px;
    padding: 0 8px 0 4px;
}

.nav-list li {
    display: flex;
    align-items: center;
    height: 21px;
    padding-left: 8px;
    gap: 9px;
    font-size: 9px;
    color: #6a6a6a;
    white-space: nowrap;
    list-style: none;
    border-bottom: 1px solid #fff;
}

.nav-list li svg {
    margin-bottom: 3px;
}

.nav-list li svg[width="12"] {
    margin-right: 2px;
}

.nav-list li.action {
    padding-left: 4px;
    gap: 10px;
}

.nav-list .selected {
    background: #fcbcbf;
    color: #7a3f42;
}

/* scrollbars */
.vscroll {
    display: flex;
    flex-direction: column;
    flex: none;
    width: 14px;
    background: #fff;
    border-left: 1px solid #ccc;
    border-right: 1px solid #ccc;
}

.vscroll button {
    height: 14px;
    flex: none;
    border-bottom: 1px solid #bbb;
    color: #555;
}

.vscroll .thumb {
    flex: 449;
    border-bottom: 1px solid #bbb;
}

.vscroll .track {
    flex: 41;
    background: #f0f0f0;
}

.doc-scroll {
    width: 15px;
}

.doc-scroll .thumb {
    flex: 330;
}

.doc-scroll .track {
    flex: 170;
    background: #cdcdcd;
}

.hscroll {
    display: flex;
    height: 15px;
    flex: none;
    padding-right: 15px;
    background: #cdcdcd;
    border: 1px solid #ccc;
}

.hscroll button {
    width: 14px;
    background: #fff;
}

.hscroll .thumb {
    flex: 677;
    background: #fff;
    border-left: 1px solid #bbb;
}

.hscroll .track {
    flex: 342;
}

/* document */
.document {
    flex: 1;
    min-width: 0;
    display: flex;
    flex-direction: column;
    margin-left: 2px;
}

.doc-tabs {
    display: flex;
    height: 20px;
    flex: none;
    border-bottom: 1px solid #8a8a8a;
}

.doc-tab {
    display: flex;
    align-items: center;
    gap: 6px;
    padding-left: 3px;
    font-size: 9px;
    font-weight: 700;
    color: var(--title-red);
    white-space: nowrap;
    border-top: 1px solid #8a8a8a;
}

.doc-tabs button {
    margin-left: auto;
    padding-right: 6px;
}

.design-area {
    display: flex;
    flex: 1;
    min-height: 0;
}

.surface {
    flex: 1;
    min-width: 0;
    display: flex;
    flex-direction: column;
    overflow: hidden;
}

.row {
    display: flex;
    flex: none;
}

.fill {
    flex: 1;
}

.gutter {
    width: 18px;
    border-left: 1px solid #ddd;
    border-right: 2px solid #c4c4c4;
    overflow: hidden;
    flex: none;
    color: #888;
    font-size: 7px;
}

.box {
    border-top: 1px solid #ddd;
    border-bottom: 1px solid #ddd;
}

.ticks {
    text-align: center;
    background: url("data:image/svg+xml,%3Csvg xmlns='http://www.w3.org/2000/svg' width='15' height='84'%3E%3Cpath stroke='%23999' d='M4 10.500h2M4 21.500h2M4 31.500h2M3 42.500h5M4 52.500h2M4 63.500h2M4 73.500h2'/%3E%3C/svg%3E") repeat-y;
    padding-top: 43px;
}

.ticks span {
    display: block;
    height: 84px;
    line-height: 84px;
    padding-right: 3px;
}

.ruler-row {
    height: 20px;
}

.ruler {
    flex: 1;
    display: flex;
    padding-left: 42px;
    background: url("data:image/svg+xml,%3Csvg xmlns='http://www.w3.org/2000/svg' width='84' height='18'%3E%3Cpath stroke='%23999' d='M10.500 5v2M21.500 5v2M31.500 5v2M42.500 4v5M52.500 5v2M63.500 5v2M73.500 5v2'/%3E%3C/svg%3E") repeat-x;
    border-bottom: 1px solid #ddd;
}

.ruler span {
    width: 84px;
    flex: none;
    text-align: center;
    font-size: 7px;
    line-height: 18px;
    color: #777;
}

.band {
    flex: 1;
    display: flex;
    height: 16px;
    font-size: 9px;
    line-height: 18px;
    color: #555;
    background: #fdfdfd;
    border-bottom: 1px solid #8a8a8a;
}

.band i {
    width: 4px;
    height: 4px;
    margin: 3px 2px 0 3px;
    background: #000;
    border-radius: 2px 0 2px 0;
}

.band.current {
    height: 15px;
    line-height: 16px;
    color: #ccc;
    background: #000;
}

.current i {
    background: #ccc;
}

.canvas {
    flex: 1;
    background: var(--gray);
}

.sheet {
    position: relative;
    width: 669px;
    border-right: 1px solid #8a8a8a;
    background-image:
        linear-gradient(to right, transparent 83px, #92949a 83px),
        url("data:image/svg+xml,%3Csvg xmlns='http://www.w3.org/2000/svg' width='7' height='7'%3E%3Cpath fill='%23667' fill-opacity='.2' d='M2 2h1v1H2zM6 2h1v1H6zM2 6h1v1H2zM6 6h1v1H6z'/%3E%3C/svg%3E");
    background-size: 84px 100%, 7px 7px;
}

.head .sheet {
    height: 75px;
    background-color: #d6dbe8;
}

.detail .sheet {
    height: 157px;
    background-color: #fff;
}

.detail .sheet::before {
    content: "";
    position: absolute;
    left: 0;
    right: 0;
    top: 84px;
    border-top: 1px solid #aaa;
}

/* controls placed on the form */
.form-title {
    position: absolute;
    left: 3px;
    top: 17px;
    width: 333px;
    height: 32px;
    border: 1px solid #a3a8b3;
    font-family: Lato, sans-serif;
    font-size: 22px;
    line-height: 28px;
    color: #75777c;
    white-space: nowrap;
}

.field {
    position: absolute;
    width: 213px;
    font-family: Lato, sans-serif;
    font-size: 12px;
}

.field label {
    display: block;
    height: 18px;
    line-height: 16px;
    padding-left: 1px;
    color: #7a7a7a;
    border: 1px solid #bbb;
}

.field input, .field .combo {
    display: block;
    width: 100%;
    height: 18px;
    padding-left: 1px;
    color: #333;
    background: #fff;
    border: 1px solid #bbb;
    border-top: 0;
}

.name {
    left: 6px;
    top: 7px;
}

.date {
    left: 304px;
    top: 7px;
    width: 200px;
}

.level {
    left: 6px;
    top: 59px;
    width: 211px;
}

.fee {
    left: 6px;
    top: 109px;
}

.combo, .field .combo {
    display: flex;
    align-items: stretch;
}

.combo select {
    flex: 1;
    min-width: 0;
    appearance: none;
}

.combo svg {
    width: 15px;
    height: auto;
    padding: 4px 3px;
    color: #777;
    background: #dcdcdc;
    border-left: 1px solid #bbb;
}

/* property sheet */
.property-sheet {
    position: absolute;
    right: 28px;
    top: 205px;
    width: 328px;
    height: 310px;
    padding: 3px 4px 4px 3px;
    background: #e3e3e3;
    border: 1px solid #d6d6d6;
    font-size: 9px;
    line-height: 12px;
    color: #555;
}

.sheet-inner {
    height: 100%;
    background: #fff;
}

.sheet-buttons {
    display: flex;
    justify-content: flex-end;
    gap: 1px;
    height: 14px;
}

.sheet-buttons button {
    width: 14px;
    height: 14px;
    background: #ececec;
}

.property-sheet h2 {
    margin-top: -10px;
    padding-left: 5px;
    width: 200px;
    font-size: 17px;
    font-weight: 300;
    line-height: 22px;
    color: var(--title-red);
}

.selection {
    display: flex;
    justify-content: space-between;
    height: 29px;
    padding: 3px 6px 0 2px;
}

.selection button {
    height: 20px;
}

.section-pick {
    width: 188px;
    height: 19px;
    margin-left: 1px;
    padding-left: 1px;
    border: 1px solid #bbb;
}

.section-pick svg {
    padding: 5px 3px;
}

.sheet-tabs {
    display: flex;
    margin: 4px 0 0 1px;
    height: 16px;
}

.sheet-tabs button {
    width: 37px;
    background: #ececec;
    border-right: 1px solid #ddd;
}

.sheet-tabs .on {
    width: 38px;
    background: #fff;
}

.property-sheet table {
    width: 315px;
    height: 162px;
    margin: 3px 0 0 2px;
    border-collapse: collapse;
    table-layout: fixed;
}

.property-sheet th, .property-sheet td {
    padding: 0 1px;
    line-height: 12px;
    font-weight: 400;
    text-align: left;
    border: 1px solid #aaa;
    white-space: nowrap;
}

.property-sheet th {
    width: 133px;
    padding-left: 0;
}

.property-sheet td .combo {
    height: 12px;
    margin-right: -1px;
}

.property-sheet td .combo svg {
    padding: 3px;
}

.sort-a, .sort-z {
    font-family: "Noto Sans", sans-serif;
    font-weight: 700;
    fill: #3b73ae;
}

.sort-z {
    fill: #7b4a9c;
}

/* status bar */
.status {
    display: flex;
    align-items: center;
    flex: none;
    height: 19px;
    padding-left: 4px;
    font-size: 9px;
    background: #f3f3f3;
    border-top: 1px solid #ddd;
}

.lock {
    margin-left: auto;
    padding-right: 11px;
}

.status button {
    width: 25px;
    height: 18px;
}

.status .on {
    background: #c8c8c8;
}

/* overlays */
.pointer {
    position: absolute;
    left: 819px;
    top: 67px;
}

.ring {
    position: absolute;
    left: 834px;
    top: 54px;
    width: 70px;
    height: 70px;
    border: 4px solid #eaa91f;
    border-radius: 50%;
    box-shadow: 0 2px 4px rgba(0, 0, 0, .35), inset 0 1px 3px rgba(0, 0, 0, .3);
}

.caption {
    position: absolute;
    left: 372px;
    right: 54px;
    top: 406px;
    height: 176px;
    padding: 22px 27px;
    color: #fff;
    background: rgba(45, 107, 169, .75);
    border-bottom: 1px solid #3e6f9f;
    font-family: "Lato Light", Lato, sans-serif;
    font-size: 52px;
    font-weight: 300;
    line-height: 64px;
    white-space: nowrap;
}

.caption strong {
    font-family: Lato, sans-serif;
    font-weight: 900;
}

.watermark {
    position: absolute;
    right: 17px;
    bottom: 16px;
    display: flex;
    align-items: center;
    height: 24px;
    font-family: Lato, sans-serif;
    font-size: 21px;
    color: #f4f4f4;
    text-shadow: 0 0 1px #666, 0 0 2px #777;
}

.watermark .in {
    margin: 0 4px 0 1px;
    padding: 0 2px;
    line-height: 20px;
    color: #aaa;
    text-shadow: none;
    background: #f4f4f4;
    border: 1px solid #999;
    border-radius: 2px;
}

.watermark span {
    font-size: 13px;
}
```
